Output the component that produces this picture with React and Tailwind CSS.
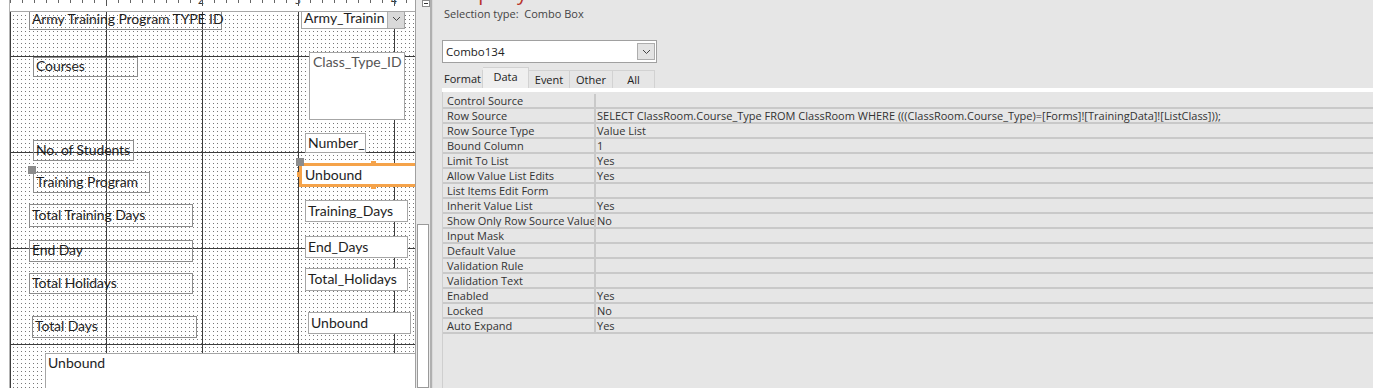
import React from "react";

// form design canvas: labels and text boxes, positions relative to the canvas
const labels = [
  { text: "Army Training Program TYPE ID", cls: "left-[19px] top-[-2px] w-[193px] h-[20px]" },
  { text: "Courses", cls: "left-[23px] top-[45px] w-[105px] h-[20px]" },
  { text: "No. of Students", cls: "left-[23px] top-[128px] w-[101px] h-[21px]" },
  { text: "Training Program", cls: "left-[23px] top-[160px] w-[117px] h-[21px]" },
  { text: "Total Training Days", cls: "left-[19px] top-[192px] w-[164px] h-[23px]" },
  { text: "End Day", cls: "left-[19px] top-[228px] w-[164px] h-[22px]" },
  { text: "Total Holidays", cls: "left-[19px] top-[261px] w-[164px] h-[21px]" },
  { text: "Total Days", cls: "left-[22px] top-[304px] w-[165px] h-[22px]" },
];

const textBoxes = [
  { text: "Number_", cls: "left-[295px] top-[121px] w-[61px] h-[20px]" },
  { text: "Training_Days", cls: "left-[295px] top-[188px] w-[103px] h-[22px]" },
  { text: "End_Days", cls: "left-[295px] top-[224px] w-[103px] h-[22px]" },
  { text: "Total_Holidays", cls: "left-[295px] top-[256px] w-[103px] h-[23px]" },
  { text: "Unbound", cls: "left-[298px] top-[300px] w-[103px] h-[22px]" },
];

const props = [
  ["Control Source", ""],
  ["Row Source", "SELECT ClassRoom.Course_Type FROM ClassRoom WHERE (((ClassRoom.Course_Type)=[Forms]![TrainingData]![ListClass]));"],
  ["Row Source Type", "Value List"],
  ["Bound Column", "1"],
  ["Limit To List", "Yes"],
  ["Allow Value List Edits", "Yes"],
  ["List Items Edit Form", ""],
  ["Inherit Value List", "Yes"],
  ["Show Only Row Source Values", "No"],
  ["Input Mask", ""],
  ["Default Value", ""],
  ["Validation Rule", ""],
  ["Validation Text", ""],
  ["Enabled", "Yes"],
  ["Locked", "No"],
  ["Auto Expand", "Yes"],
];

function Chevron() {
  return (
    <svg width="9" height="6" viewBox="0 0 9 6" fill="none">
      <polyline points="1,1 4.5,4.5 8,1" stroke="#444" strokeWidth="1" />
    </svg>
  );
}

function Ruler() {
  return (
    <div className="relative h-[12px] bg-white border-b border-[#a8a8a8] overflow-hidden bg-[repeating-linear-gradient(to_right,#666_0_1px,transparent_1px_12px)] [background-size:100%_3px] bg-no-repeat">
      <span className="absolute left-[96px] top-0 w-px h-[6px] bg-[#555]" />
      <span className="absolute left-[188px] top-[-5px] text-[10px] leading-[10px] text-[#333]">2</span>
      <span className="absolute left-[192px] top-0 w-px h-[6px] bg-[#555]" />
      <span className="absolute left-[285px] top-[-5px] text-[10px] leading-[10px] text-[#333]">3</span>
      <span className="absolute left-[288px] top-0 w-px h-[6px] bg-[#555]" />
      <span className="absolute left-[381px] top-[-5px] text-[10px] leading-[10px] text-[#333]">4</span>
      <span className="absolute left-[384px] top-0 w-px h-[6px] bg-[#555]" />
    </div>
  );
}

function DesignCanvas() {
  return (
    <div className="relative flex-1 overflow-hidden bg-white [background-image:linear-gradient(to_right,#3c3c3c_1px,transparent_1px),linear-gradient(to_bottom,#3c3c3c_1px,transparent_1px),linear-gradient(to_right,#fff_3px,transparent_3px),linear-gradient(to_bottom,#fff_3px,#777_3px)] [background-size:96px_96px,96px_96px,4px_4px,4px_4px] [background-position:0_0,0_44px,0_0,0_0] font-['Lato',sans-serif] text-[14px] text-[#1e1e1e]">
      {labels.map((l) => (
        <div key={l.text} className={`absolute flex items-center pl-[2px] pb-[3px] border border-[#8c8c8c] whitespace-nowrap tracking-[-0.1px] ${l.cls}`}>
          {l.text}
        </div>
      ))}

      {/* combo box */}
      <div className="absolute left-[291px] top-[-4px] w-[104px] h-[21px] flex bg-white border border-[#a6a6a6]">
        <div className="flex-1 pl-[2px] pb-[2px] flex items-center overflow-hidden whitespace-nowrap">Army_Trainin</div>
        <div className="w-[17px] bg-[#d9d9d9] border-l border-[#b0b0b0] flex items-center justify-center">
          <Chevron />
        </div>
      </div>

      {/* list box */}
      <div className="absolute left-[299px] top-[40px] w-[96px] h-[68px] bg-white border border-[#a6a6a6] pl-[3px] text-[#555] leading-[18px] whitespace-nowrap overflow-hidden">
        Class_Type_ID
      </div>

      {textBoxes.map((t) => (
        <div key={t.text + t.cls} className={`absolute flex items-center pl-[2px] pb-[2px] bg-white border border-[#a6a6a6] whitespace-nowrap overflow-hidden ${t.cls}`}>
          {t.text}
        </div>
      ))}

      {/* selected control */}
      <div className="absolute left-[289px] top-[151px] w-[140px] h-[24px] bg-white border-[3px] border-[#f5a34a] flex items-center pl-[3px] pb-[1px]">
        Unbound
      </div>
      <span className="absolute left-[286px] top-[146px] w-[8px] h-[8px] bg-[#8c8c8c]" />
      <span className="absolute left-[361px] top-[149px] w-[5px] h-[5px] bg-[#f5a34a]" />
      <span className="absolute left-[361px] top-[172px] w-[5px] h-[5px] bg-[#f5a34a]" />
      <span className="absolute left-[287px] top-[160px] w-[5px] h-[5px] bg-[#f5a34a]" />

      {/* handle on label */}
      <span className="absolute left-[18px] top-[154px] w-[8px] h-[8px] bg-[#8c8c8c]" />

      {/* bottom text box */}
      <div className="absolute left-[35px] top-[341px] w-[380px] h-[60px] bg-white border border-[#a6a6a6] pl-[2px] leading-[18px]">
        Unbound
      </div>
    </div>
  );
}

function PropertySheet() {
  return (
    <div className="flex-1 flex flex-col pl-[9px] bg-[#e6e6e6] font-['Open_Sans',sans-serif] text-[#333]">
      <div className="h-[6px] overflow-hidden">
        <div className="text-[20px] leading-[20px] text-[#b8322b] mt-[-17px] pl-[4px]">Property Sheet</div>
      </div>
      <div className="pl-[2px] text-[11px] leading-[15px] text-[#444]">Selection type:&nbsp; Combo Box</div>

      <div className="mt-[19px] w-[215px] h-[23px] flex bg-white border border-[#a0a0a0]">
        <div className="flex-1 flex items-center pl-[3px] text-[11.5px] text-[#222]">Combo134</div>
        <div className="w-[18px] my-[2px] mr-[1px] bg-[#e3e3e3] border border-[#adadad] flex items-center justify-center">
          <Chevron />
        </div>
      </div>

      <div className="mt-[4px] h-[21px] flex items-end text-[11px] text-[#222]">
        <div className="w-[41px] h-[18px] pl-[2px] leading-[18px] border-r border-[#d2d2d2] whitespace-nowrap">Format</div>
        <div className="w-[46px] h-[21px] bg-[#efefef] border-t border-r border-[#d2d2d2] text-center leading-[17px]">Data</div>
        <div className="w-[41px] h-[18px] border-t border-r border-[#d2d2d2] text-center leading-[18px]">Event</div>
        <div className="w-[43px] h-[18px] border-t border-r border-[#d2d2d2] text-center leading-[18px]">Other</div>
        <div className="w-[42px] h-[18px] border-t border-r border-[#d2d2d2] text-center leading-[18px]">All</div>
      </div>
      <div className="h-[4px] bg-white" />

      <div className="flex-1 pt-[2px] border-l border-[#cfcfcf] text-[11px]">
        {props.map(([k, v]) => (
          <div key={k} className="flex h-[15px] border-b-2 border-[#c9c9c9]">
            <div className="w-[153px] shrink-0 pl-[4px] leading-[13px] border-r-2 border-[#c9c9c9] overflow-hidden whitespace-nowrap">{k}</div>
            <div className="pl-[1px] leading-[13px] whitespace-nowrap">{v}</div>
          </div>
        ))}
      </div>
    </div>
  );
}

export default function App() {
  return (
    <div className="flex w-[1373px] h-[388px] overflow-hidden bg-[#e6e6e6]">
      {/* design view */}
      <div className="flex w-[430px] shrink-0">
        <div className="w-[10px] bg-white border-r border-[#b4b4b4]" />
        <div className="flex-1 flex flex-col">
          <Ruler />
          <DesignCanvas />
        </div>
        <div className="w-[15px] flex flex-col border-l border-[#a0a0a0] bg-[#e9e9e9]">
          <div className="ml-auto w-[8px] h-[7px] bg-white border border-[#8a8a8a] flex items-center justify-center">
            <div className="w-[4px] h-px bg-[#333]" />
          </div>
          <div className="mt-[217px] flex-1 mx-[1px] bg-white border border-[#9a9a9a]" />
        </div>
      </div>
      <div className="w-[3px] shrink-0 border-l-2 border-[#b0b0b0] bg-[#dadada]" />
      <PropertySheet />
    </div>
  );
}
